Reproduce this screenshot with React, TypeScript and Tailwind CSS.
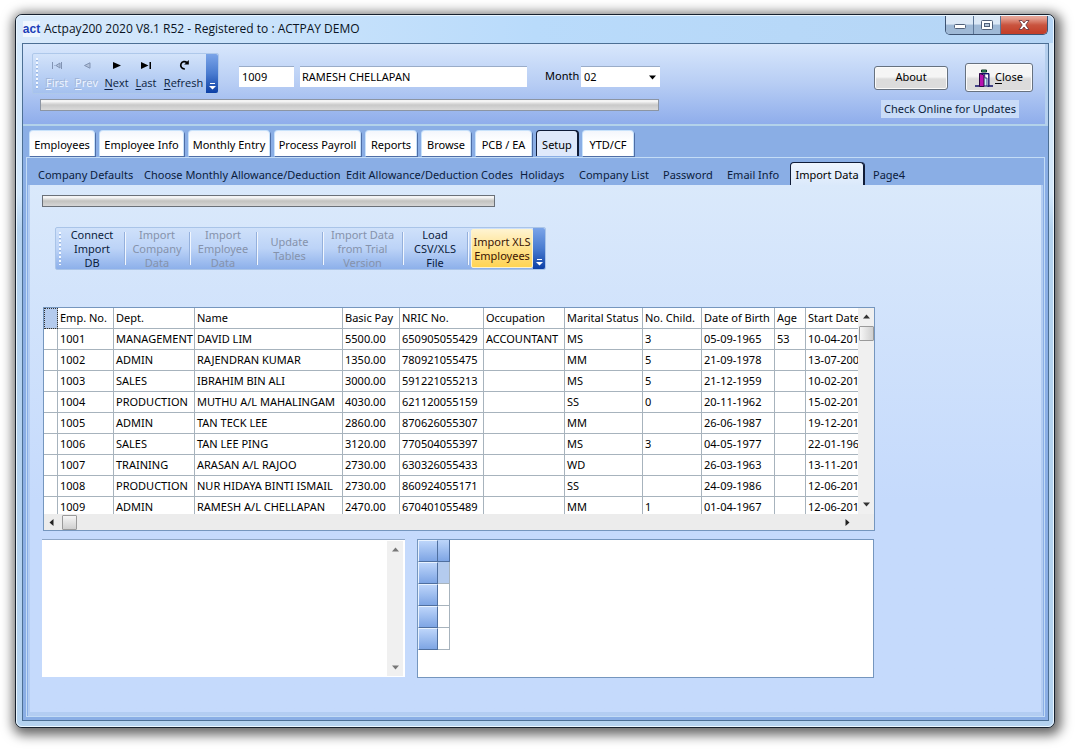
import React from "react";

const mainTabs = [
  { label: "Employees", width: "w-[66px]" },
  { label: "Employee Info", width: "w-[85px]" },
  { label: "Monthly Entry", width: "w-[82px]" },
  { label: "Process Payroll", width: "w-[87px]" },
  { label: "Reports", width: "w-[52px]" },
  { label: "Browse", width: "w-[50px]" },
  { label: "PCB / EA", width: "w-[57px]" },
  { label: "Setup", width: "w-[42px]" },
  { label: "YTD/CF", width: "w-[52px]" },
];

const subTabs = [
  { label: "Company Defaults", width: "w-[106px]" },
  { label: "Choose Monthly Allowance/Deduction", width: "w-[202px]" },
  { label: "Edit Allowance/Deduction Codes", width: "w-[174px]" },
  { label: "Holidays", width: "w-[59px]" },
  { label: "Company List", width: "w-[84px]" },
  { label: "Password", width: "w-[64px]" },
  { label: "Email Info", width: "w-[63px]" },
  { label: "Import Data", width: "w-[74px]" },
  { label: "Page4", width: "w-[50px]" },
];

const importActions = [
  { lines: ["Connect", "Import", "DB"], enabled: true, width: "w-[65px]" },
  { lines: ["Import", "Company", "Data"], enabled: false, width: "w-[65px]" },
  { lines: ["Import", "Employee", "Data"], enabled: false, width: "w-[67px]" },
  { lines: ["Update", "Tables"], enabled: false, width: "w-[66px]" },
  { lines: ["Import Data", "from Trial", "Version"], enabled: false, width: "w-[80px]" },
  { lines: ["Load", "CSV/XLS", "File"], enabled: true, width: "w-[65px]" },
];

const columns = [
  { title: "Emp. No.", width: "w-[56px]" },
  { title: "Dept.", width: "w-[81px]" },
  { title: "Name", width: "w-[148px]" },
  { title: "Basic Pay", width: "w-[57px]" },
  { title: "NRIC No.", width: "w-[84px]" },
  { title: "Occupation", width: "w-[81px]" },
  { title: "Marital Status", width: "w-[78px]" },
  { title: "No. Child.", width: "w-[59px]" },
  { title: "Date of Birth", width: "w-[73px]" },
  { title: "Age", width: "w-[31px]" },
  { title: "Start Date", width: "w-[70px]" },
];

const rows = [
  ["1001", "MANAGEMENT", "DAVID LIM", "5500.00", "650905055429", "ACCOUNTANT", "MS", "3", "05-09-1965", "53", "10-04-2010"],
  ["1002", "ADMIN", "RAJENDRAN KUMAR", "1350.00", "780921055475", "", "MM", "5", "21-09-1978", "", "13-07-2009"],
  ["1003", "SALES", "IBRAHIM BIN ALI", "3000.00", "591221055213", "", "MS", "5", "21-12-1959", "", "10-02-2010"],
  ["1004", "PRODUCTION", "MUTHU A/L MAHALINGAM", "4030.00", "621120055159", "", "SS", "0", "20-11-1962", "", "15-02-2010"],
  ["1005", "ADMIN", "TAN TECK LEE", "2860.00", "870626055307", "", "MM", "", "26-06-1987", "", "19-12-2010"],
  ["1006", "SALES", "TAN LEE PING", "3120.00", "770504055397", "", "MS", "3", "04-05-1977", "", "22-01-1960"],
  ["1007", "TRAINING", "ARASAN A/L RAJOO", "2730.00", "630326055433", "", "WD", "", "26-03-1963", "", "13-11-2010"],
  ["1008", "PRODUCTION", "NUR HIDAYA BINTI ISMAIL", "2730.00", "860924055171", "", "SS", "", "24-09-1986", "", "12-06-2010"],
  ["1009", "ADMIN", "RAMESH A/L CHELLAPAN", "2470.00", "670401055489", "", "MM", "1", "01-04-1967", "", "12-06-2010"],
];

type Direction = "up" | "down" | "left" | "right";

const arrowPaths: Record<Direction, string> = {
  up: "M0 5.5L3.5 1.5L7 5.5Z",
  down: "M0 1.5L3.5 5.5L7 1.5Z",
  left: "M5.5 0L1.5 3.5L5.5 7Z",
  right: "M1.5 0L5.5 3.5L1.5 7Z",
};

function Arrow({ dir, className = "" }: { dir: Direction; className?: string }) {
  return (
    <svg viewBox="0 0 7 7" className={`size-[7px] fill-current ${className}`} aria-hidden="true">
      <path d={arrowPaths[dir]} />
    </svg>
  );
}

function Grip({ className }: { className: string }) {
  return <div className={`w-[2px] bg-[repeating-linear-gradient(#f4f9ff_0_2px,#9ab6e2_2px_3px,transparent_3px_4px)] ${className}`} />;
}

function OverflowButton() {
  return (
    <button
      type="button"
      aria-label="Toolbar options"
      className="flex w-[12px] shrink-0 items-end justify-center rounded-r-[2px] bg-linear-to-b from-[#7ba4e8] via-[#4a7cd0] to-[#0b3fa6] pb-[3px] text-white"
    >
      <svg viewBox="0 0 7 7" className="size-[7px]" aria-hidden="true">
        <path d="M1 0h5v1H1zM0 3h7L3.5 6.5z" fill="#fff" />
      </svg>
    </button>
  );
}

function NavButton({ label, disabled, className, children }: { label: string; disabled?: boolean; className: string; children: React.ReactNode }) {
  return (
    <button
      type="button"
      disabled={disabled}
      className={`flex flex-col items-center font-['Open_Sans','Noto_Sans',sans-serif] text-[11px] leading-[14px] ${className} ${disabled ? "text-[#f1f6fe] [text-shadow:-1px_-1px_0_#9fb3d6]" : "text-[#0b1c3c]"}`}
    >
      <span className="flex h-[16px] items-center">{children}</span>
      <span className="mt-[3px]">
        <span className="underline underline-offset-2">{label[0]}</span>
        {label.slice(1)}
      </span>
    </button>
  );
}

function TitleBar() {
  return (
    <header className="flex h-[27px] shrink-0 items-start bg-linear-to-r from-[#d9eafb] via-[#b9dbfb] to-[#b5d5f5] pl-[6px]">
      <div className="mt-[5px] flex h-[16px] w-[17px] items-center justify-center bg-[#eef6fe]">
        <span className="font-['Liberation_Sans',sans-serif] text-[12px] leading-[14px] font-bold text-[#1c3fb8]">act</span>
      </div>
      <h1 className="mt-[4px] ml-[4px] flex-1 font-['Open_Sans','Noto_Sans',sans-serif] text-[12px] leading-[17px] text-[#0a1322]">
        Actpay200 2020 V8.1 R52 - Registered to : ACTPAY DEMO
      </h1>
      <div className="mr-[5px] flex h-[19px] overflow-hidden rounded-b-[5px] border border-t-0 border-[#3d5372]">
        <button type="button" aria-label="Minimize" className="flex w-[28px] items-center justify-center border-r border-[#5c7697] bg-linear-to-b from-[#dbe8f6] from-45% to-[#9fb9d6] to-50%">
          <svg viewBox="0 0 12 6" className="mt-[4px] h-[6px] w-[12px]" aria-hidden="true">
            <rect x=".5" y=".5" width="11" height="4" rx="1" fill="#fff" stroke="#50607a" />
          </svg>
        </button>
        <button type="button" aria-label="Maximize" className="flex w-[27px] items-center justify-center border-r border-[#5c7697] bg-linear-to-b from-[#dbe8f6] from-45% to-[#9fb9d6] to-50%">
          <svg viewBox="0 0 12 10" className="h-[10px] w-[12px]" aria-hidden="true">
            <rect x=".5" y=".5" width="11" height="9" rx="1" fill="#fff" stroke="#50607a" />
            <rect x="3.5" y="3.5" width="5" height="3" fill="#b4c6da" stroke="#50607a" />
          </svg>
        </button>
        <button type="button" aria-label="Close window" className="flex w-[46px] items-center justify-center bg-linear-to-b from-[#e5a294] from-10% via-[#c9543f] via-50% to-[#c4402a] to-90%">
          <svg viewBox="0 0 12 10" className="h-[10px] w-[12px]" aria-hidden="true">
            <path d="M1 .5h3L6 3 8 .5h3L7.8 5 11 9.500H8L6 7 4 9.500H1L4.200 5z" fill="#fff" stroke="#60303a" strokeWidth=".8" />
          </svg>
        </button>
      </div>
    </header>
  );
}

function TopPanel() {
  return (
    <section className="flex h-[82px] shrink-0 justify-between border-r-[3px] border-b-2 border-[#b4cfee] border-b-[#b3d2ea] bg-linear-to-b from-[#d8e7fc] via-[#b7cdf4] to-[#8fadeb] pt-[9px] pl-[9px]">
      <div>
        <div className="flex items-start">
          <div role="toolbar" aria-label="Record navigation" className="flex h-[41px] w-[187px] rounded-[2px] border border-[#aec8ea] bg-linear-to-b from-[#d3e3fa] to-[#a5c1ef]">
            <Grip className="my-[4px] ml-[3px]" />
            <div className="flex flex-1 pt-[3px] pl-[5px]">
              <NavButton label="First" disabled className="w-[28px]">
                <svg viewBox="0 0 10 7" className="h-[7px] w-[10px]" aria-hidden="true"><path d="M.5 0v7M9.500 0v7M2.500 3.500h1M8 1L4 3.500 8 6z" stroke="#8193b3" fill="#b3c3dc" /></svg>
              </NavButton>
              <NavButton label="Prev" disabled className="w-[31px]">
                <svg viewBox="0 0 8 7" className="h-[7px] w-[8px]" aria-hidden="true"><path d="M7 .8L1.500 3.500 7 6.200z" stroke="#8193b3" fill="#b3c3dc" /></svg>
              </NavButton>
              <NavButton label="Next" className="w-[29px]">
                <svg viewBox="0 0 8 7" className="h-[7px] w-[8px]" aria-hidden="true"><path d="M0 0L8 3.500 0 7z" fill="#000" /></svg>
              </NavButton>
              <NavButton label="Last" className="w-[30px]">
                <svg viewBox="0 0 10 7" className="h-[7px] w-[10px]" aria-hidden="true"><path d="M0 0L7.500 3.500 0 7zM8.500 0H10v7H8.500z" fill="#000" /></svg>
              </NavButton>
              <NavButton label="Refresh" className="w-[45px]">
                <svg viewBox="0 0 10 10" className="size-[10px]" aria-hidden="true">
                  <path d="M8 2.800A3.600 3.600 0 1 0 5.800 8.800" fill="none" stroke="#000" strokeWidth="1.700" />
                  <path d="M9.800 0v4.600H5.200z" fill="#000" />
                </svg>
              </NavButton>
            </div>
            <OverflowButton />
          </div>
          <input aria-label="Employee number" defaultValue="1009" className="mt-[13px] ml-[20px] h-[21px] w-[55px] border-t border-[#9aacc8] bg-white pb-px pl-[3px] leading-[18px] outline-none" />
          <input aria-label="Employee name" defaultValue="RAMESH CHELLAPAN" className="mt-[13px] ml-[6px] h-[21px] w-[227px] border-t border-[#9aacc8] bg-white pb-px pl-[2px] leading-[18px] outline-none" />
          <label htmlFor="month" className="mt-[15px] ml-[18px] w-[36px] leading-[16px]">Month</label>
          <div className="relative mt-[13px]">
            <select id="month" defaultValue="02" className="block h-[21px] w-[79px] appearance-none border-t border-[#9aacc8] bg-white pb-px pl-[3px] leading-[18px] outline-none">
              <option>01</option>
              <option>02</option>
              <option>03</option>
            </select>
            <Arrow dir="down" className="pointer-events-none absolute top-[8px] right-[4px] text-black" />
          </div>
        </div>
        <div role="progressbar" aria-label="Overall progress" className="mt-[5px] ml-[8px] h-[12px] w-[619px] border border-[#8c95a3] bg-linear-to-b from-[#f4f4f4] from-15% via-[#c9c9c9] via-50% to-[#dadada]" />
      </div>
      <div className="mr-[12px] flex flex-col items-end">
        <div className="flex items-center gap-[17px] pt-[10px]">
          <button type="button" className="h-[24px] w-[74px] rounded-[3px] border border-[#66717f] bg-linear-to-b from-[#f5f5f5] from-45% to-[#dcdcdc] to-55% text-[11px] shadow-[inset_0_0_0_1px_#fbfbfb]">
            About
          </button>
          <button type="button" className="flex h-[29px] w-[68px] items-center rounded-[3px] border border-[#66717f] bg-linear-to-b from-[#f5f5f5] from-45% to-[#dcdcdc] to-55% pl-[9px] text-[11px] shadow-[inset_0_0_0_1px_#fbfbfb]">
            <svg viewBox="0 0 18 18" className="size-[18px]" aria-hidden="true">
              <path d="M0 17h5M13 17h5" stroke="#10106a" strokeWidth="1.500" />
              <path d="M5 4.500h9V17H5z" fill="#c8f4f8" stroke="#10106a" />
              <path d="M9.500 5H13.500v12H12V9h-2z" fill="#fff" stroke="#10106a" strokeWidth=".8" />
              <path d="M4.500 4.500L9 6v11.500H4.500z" fill="#b812b0" stroke="#2c0845" />
              <path d="M6.500 1h5v2h-5z" fill="#3fae72" stroke="#0a3020" />
            </svg>
            <span className="ml-[2px]"><span className="underline underline-offset-2">C</span>lose</span>
          </button>
        </div>
        <a href="#updates" className="mt-[8px] mr-[14px] bg-[#c9dcf8] px-[3px] text-[11px] leading-[18px] text-[#0b1c3c]">
          Check Online for Updates
        </a>
      </div>
    </section>
  );
}

function MainTabs() {
  return (
    <nav aria-label="Main sections" className="flex h-[31px] shrink-0 items-end gap-[4px] pb-px pl-[6px]">
      {mainTabs.map((tab) => (
        <button
          key={tab.label}
          type="button"
          className={`h-[26px] shrink-0 rounded-t-[4px] border border-b-0 pt-[3px] text-[11px] whitespace-nowrap ${tab.width} ${
            tab.label === "Setup"
              ? "border-[#101c38] bg-[#dfe9fb] shadow-[1px_0_0_#101c38]"
              : "border-[#c8e2fb] bg-linear-to-b from-[#f3f6fc] to-white to-40% shadow-[1px_1px_0_#4f6ea6]"
          }`}
        >
          {tab.label}
        </button>
      ))}
    </nav>
  );
}

function SubTabs() {
  return (
    <nav aria-label="Setup pages" className="flex h-[27px] shrink-0 items-end pl-[11px]">
      {subTabs.map((tab) =>
        tab.label === "Import Data" ? (
          <button key={tab.label} type="button" className={`mr-[9px] h-[23px] shrink-0 rounded-t-[4px] border border-b-0 border-[#101c38] bg-linear-to-b from-[#eef5fe] to-[#dbe9fb] pt-[2px] text-[11px] whitespace-nowrap shadow-[1px_0_0_#101c38] ${tab.width}`}>
            {tab.label}
          </button>
        ) : (
          <button key={tab.label} type="button" className={`h-[20px] shrink-0 text-left text-[11px] whitespace-nowrap text-[#0b1c3c] ${tab.width}`}>
            {tab.label}
          </button>
        ),
      )}
    </nav>
  );
}

function ImportToolbar() {
  return (
    <div role="toolbar" aria-label="Import actions" className="mt-[20px] ml-[25px] flex h-[43px] w-[491px] rounded-[2px] border border-[#a9c4e8] bg-linear-to-b from-[#cfe1fa] via-[#bcd3f7] to-[#8db0ea]">
      <Grip className="my-[4px] ml-[3px]" />
      <div className="flex flex-1">
        {importActions.map((action) => (
          <div key={action.lines.join(" ")} className={`flex shrink-0 ${action.width}`}>
            <button type="button" disabled={!action.enabled} className={`flex flex-1 flex-col items-center justify-center pr-[2px] text-[11px] leading-[14px] whitespace-nowrap ${action.enabled ? "text-[#0b1c3c]" : "text-[#8592ab]"}`}>
              {action.lines.map((line) => (
                <span key={line}>{line}</span>
              ))}
            </button>
            <div className="my-[4px] w-px bg-[#f1f6fe] shadow-[-1px_0_0_#94b0dc]" />
          </div>
        ))}
        <button type="button" className="my-px ml-[2px] flex w-[62px] flex-col items-center justify-center rounded-[2px] border border-[#fdf4cf] bg-linear-to-b from-[#fff3cf] via-[#ffe28c] to-[#ffd452] text-[11px] leading-[14px] whitespace-nowrap text-[#3a1404]">
          <span>Import XLS</span>
          <span>Employees</span>
        </button>
      </div>
      <OverflowButton />
    </div>
  );
}

function EmployeeGrid() {
  return (
    <div className="mt-[37px] ml-[13px] w-[832px] border border-[#7596be] bg-[#ececec]">
      <div className="flex h-[206px]">
        <div className="min-w-0 flex-1 overflow-hidden bg-white">
          <table className="w-[832px] table-fixed border-separate border-spacing-0 text-[11px] leading-[14px]">
            <colgroup>
              <col className="w-[14px]" />
              {columns.map((column) => (
                <col key={column.title} className={column.width} />
              ))}
            </colgroup>
            <thead>
              <tr className="h-[21px]">
                <th aria-label="Row marker" className="border-r border-b border-[#a7b3bd] bg-[#b4cbee] p-0 outline outline-dotted -outline-offset-1 outline-[#333]" />
                {columns.map((column) => (
                  <th key={column.title} scope="col" className="overflow-hidden border-r border-b border-[#a7b3bd] py-0 pr-0 pl-[2px] text-left font-normal whitespace-nowrap">
                    {column.title}
                  </th>
                ))}
              </tr>
            </thead>
            <tbody>
              {rows.map((row) => (
                <tr key={row[0]} className="h-[21px]">
                  <td className="border-r border-b border-[#a7b3bd] p-0" />
                  {row.map((cell, i) => (
                    <td key={columns[i].title} className="overflow-hidden border-r border-b border-[#a7b3bd] py-0 pr-0 pl-[2px] whitespace-nowrap">
                      {cell}
                    </td>
                  ))}
                </tr>
              ))}
            </tbody>
          </table>
        </div>
        <div className="flex w-[16px] shrink-0 flex-col items-center bg-[#f0f0f0] pt-[5px] pb-[6px] text-[#333]">
          <Arrow dir="up" />
          <div className="mt-[6px] h-[15px] w-[15px] rounded-[1px] border border-[#9a9a9a] bg-linear-to-r from-[#f6f6f6] to-[#cfcfcf]" />
          <Arrow dir="down" className="mt-auto" />
        </div>
      </div>
      <div className="flex h-[16px] items-center pr-[23px] pl-[4px] text-[#222]">
        <Arrow dir="left" />
        <div className="ml-[7px] h-[15px] w-[15px] rounded-[1px] border border-[#9a9a9a] bg-linear-to-b from-[#f6f6f6] to-[#cfcfcf]" />
        <Arrow dir="right" className="ml-auto" />
      </div>
    </div>
  );
}

function LowerPanes() {
  return (
    <div className="mt-[8px] ml-[12px] flex items-start gap-[12px]">
      <div className="flex h-[138px] w-[363px] border-t border-[#8ea6c6] bg-white p-[1px]">
        <textarea aria-label="Import log" className="block flex-1 resize-none outline-none" />
        <div className="mr-[1px] flex w-[16px] flex-col items-center justify-between bg-[#f0f0f0] py-[5px] text-[#777]">
          <Arrow dir="up" />
          <Arrow dir="down" />
        </div>
      </div>
      <div className="h-[139px] w-[457px] border border-[#7596be] bg-white">
        <table aria-label="Spreadsheet preview" className="w-[32px] table-fixed border-separate border-spacing-0">
          <tbody>
            {[0, 1, 2, 3, 4].map((row) => (
              <tr key={row} className="h-[22px]">
                <td className="w-[20px] border-t border-r border-b border-l border-t-[#e8f2ff] border-r-[#4f6f9f] border-b-[#4f6f9f] border-l-[#e8f2ff] bg-linear-to-b from-[#bdd5fa] to-[#7ea5e4] p-0" />
                <td
                  className={`w-[12px] border-r border-b p-0 ${
                    row === 0
                      ? "border-[#4f6f9f] bg-linear-to-b from-[#bdd5fa] to-[#7ea5e4]"
                      : row === 1
                        ? "border-[#a7b3bd] bg-[#b4cbee]"
                        : "border-[#a7b3bd] bg-white"
                  }`}
                />
              </tr>
            ))}
          </tbody>
        </table>
      </div>
    </div>
  );
}

export default function App() {
  return (
    <div className="flex min-h-screen bg-white pt-[14px] pr-[20px] pb-[21px] pl-[15px] font-['Noto_Sans',sans-serif] text-[11px] text-black">
      <div className="flex min-w-0 flex-1 flex-col rounded-[7px] border border-[#16202e] bg-[#bcdcf6] shadow-[2px_3px_12px_4px_rgba(0,0,0,0.6)]">
        <div className="flex min-w-0 flex-1 flex-col overflow-hidden rounded-[6px] border border-[#eaf6ff] bg-linear-to-b from-[#d4e8fb] from-25% to-[#b4d2ef] to-30%">
          <TitleBar />
          <main className="mr-[4px] mb-[5px] ml-[5px] flex flex-1 flex-col border border-[#4c6f94] bg-[#8aaee5]">
            <TopPanel />
            <MainTabs />
            <div className="mx-[3px] mb-[3px] flex flex-1 flex-col border border-[#c3dcf6]">
              <SubTabs />
              <section aria-label="Import Data" className="mx-px flex-1 border-x-2 border-b-4 border-[#b3cdf2] bg-linear-to-b from-[#dae9fb] to-[#c5dafc] to-60%">
                <div role="progressbar" aria-label="Import progress" className="mt-[10px] ml-[12px] h-[12px] w-[453px] border border-[#6a7078] bg-linear-to-b from-[#f4f4f4] from-15% via-[#c3c3c0] via-50% to-[#d6d6d6]" />
                <ImportToolbar />
                <EmployeeGrid />
                <LowerPanes />
              </section>
            </div>
          </main>
        </div>
      </div>
    </div>
  );
}
